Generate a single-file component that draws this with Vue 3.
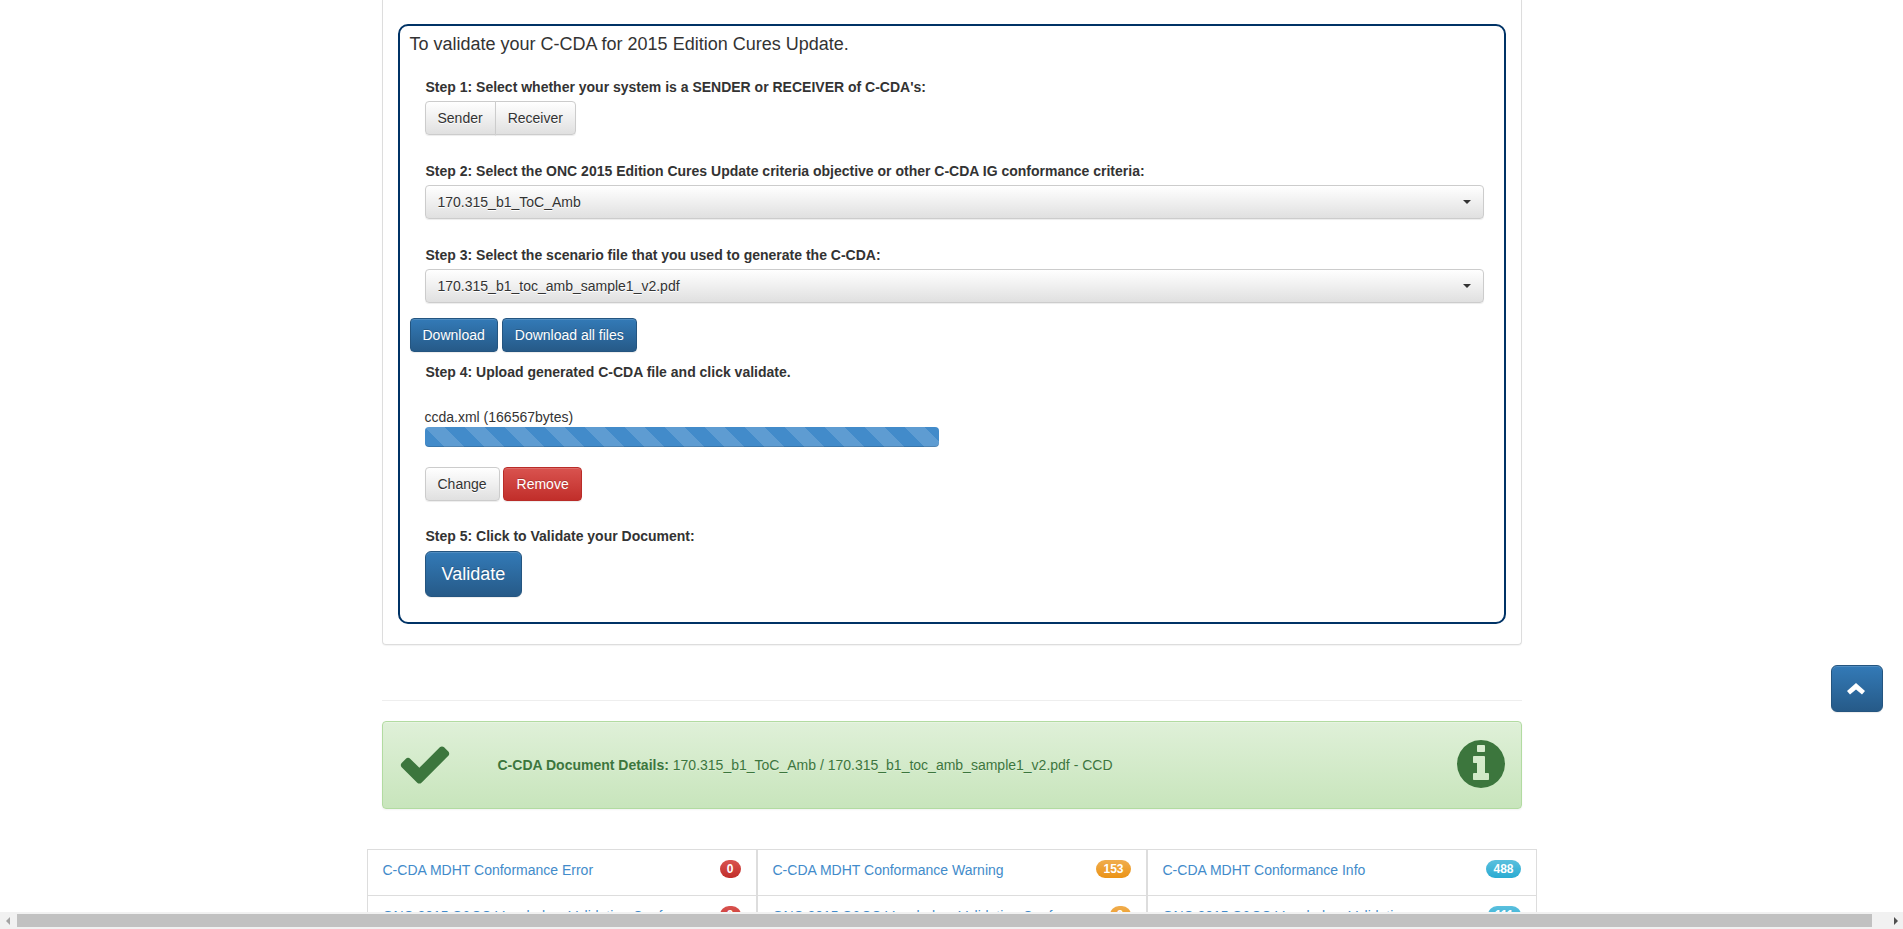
<script setup>
const steps = {
  one: "Step 1: Select whether your system is a SENDER or RECEIVER of C-CDA's:",
  two: 'Step 2: Select the ONC 2015 Edition Cures Update criteria objective or other C-CDA IG conformance criteria:',
  three: 'Step 3: Select the scenario file that you used to generate the C-CDA:',
  four: 'Step 4: Upload generated C-CDA file and click validate.',
  five: 'Step 5: Click to Validate your Document:'
}
const results = [
  { label: 'C-CDA MDHT Conformance Error', count: '0', kind: 'red' },
  { label: 'C-CDA MDHT Conformance Warning', count: '153', kind: 'orange' },
  { label: 'C-CDA MDHT Conformance Info', count: '488', kind: 'blue' },
  { label: 'ONC 2015 S&CC Vocabulary Validation Conformance Error', count: '0', kind: 'red' },
  { label: 'ONC 2015 S&CC Vocabulary Validation Conformance Warning', count: '0', kind: 'orange' },
  { label: 'ONC 2015 S&CC Vocabulary Validation Conformance Info', count: '111', kind: 'blue' }
]
</script>

<template>
  <div class="window">
    <div class="viewport">
      <main class="container">
        <section class="panel">
          <div class="box">
            <h4 class="title">To validate your C-CDA for 2015 Edition Cures Update.</h4>

            <div class="field">
              <label class="step">{{ steps.one }}</label>
              <div class="btn-group">
                <button class="btn btn-default">Sender</button>
                <button class="btn btn-default">Receiver</button>
              </div>
            </div>

            <div class="field">
              <label class="step">{{ steps.two }}</label>
              <button class="btn btn-default select">
                <span>170.315_b1_ToC_Amb</span><i class="caret"></i>
              </button>
            </div>

            <div class="field">
              <label class="step">{{ steps.three }}</label>
              <button class="btn btn-default select">
                <span>170.315_b1_toc_amb_sample1_v2.pdf</span><i class="caret"></i>
              </button>
            </div>

            <div class="downloads">
              <button class="btn btn-primary">Download</button>
              <button class="btn btn-primary">Download all files</button>
            </div>

            <div class="upload">
              <label class="step">{{ steps.four }}</label>
              <div class="filename">ccda.xml (166567bytes)</div>
              <div class="progress"></div>
              <div class="actions">
                <button class="btn btn-default">Change</button>
                <button class="btn btn-danger">Remove</button>
              </div>
            </div>

            <div class="validate-field">
              <label class="step">{{ steps.five }}</label>
              <button class="btn btn-primary btn-lg">Validate</button>
            </div>
          </div>
        </section>

        <hr class="rule" />

        <div class="alert">
          <svg class="alert-icon" viewBox="0 0 1792 1792" aria-hidden="true">
            <path d="M1671 566q0 40-28 68l-724 724-136 136q-28 28-68 28t-68-28l-136-136-362-362q-28-28-28-68t28-68l136-136q28-28 68-28t68 28l294 295 656-657q28-28 68-28t68 28l136 136q28 28 28 68z" />
          </svg>
          <p class="alert-text"><b>C-CDA Document Details:</b> 170.315_b1_ToC_Amb / 170.315_b1_toc_amb_sample1_v2.pdf - CCD</p>
          <svg class="alert-icon" viewBox="0 0 1792 1792" aria-hidden="true">
            <path d="M1152 1376v-160q0-14-9-23t-23-9h-96v-512q0-14-9-23t-23-9h-320q-14 0-23 9t-9 23v160q0 14 9 23t23 9h96v320h-96q-14 0-23 9t-9 23v160q0 14 9 23t23 9h448q14 0 23-9t9-23zm-128-896v-160q0-14-9-23t-23-9h-192q-14 0-23 9t-9 23v160q0 14 9 23t23 9h192q14 0 23-9t9-23zm640 416q0 209-103 385.5t-279.5 279.5-385.5 103-385.5-103-279.5-279.5-103-385.5 103-385.5 279.5-279.5 385.5-103 385.5 103 279.5 279.5 103 385.5z" />
          </svg>
        </div>

        <div class="results">
          <a v-for="r in results" :key="r.label" class="result" href="#">
            <span class="badge" :class="r.kind">{{ r.count }}</span>{{ r.label }}
          </a>
        </div>
      </main>

      <button class="btn btn-primary to-top" aria-label="Back to top">
        <svg viewBox="0 0 18 12" width="18" height="12" aria-hidden="true">
          <path d="M9 0 L18 8 L15 11.5 L9 6.4 L3 11.5 L0 8 Z" fill="#fff" />
        </svg>
      </button>
    </div>

    <div class="hscroll">
      <span class="arrow left"></span>
      <span class="thumb"></span>
      <span class="arrow right"></span>
    </div>
  </div>
</template>

<style scoped>
.window {
  display: flex;
  flex-direction: column;
  height: 929px;
  font-family: "Liberation Sans", Arial, sans-serif;
  font-size: 14px;
  line-height: 20px;
  color: #333;
  background: #fff;
}
.viewport {
  position: relative;
  flex: 1;
  min-height: 0;
  overflow: hidden;
}
.container {
  width: 1140px;
  margin: 0 auto;
}
.panel {
  padding: 24px 15px 20px;
  border: 1px solid #ddd;
  border-top: 0;
  border-radius: 0 0 4px 4px;
  box-shadow: 0 1px 1px rgba(0, 0, 0, 0.05);
}
.box {
  height: 600px;
  box-sizing: border-box;
  padding: 8px 10px 0;
  border: 2px solid #003366;
  border-radius: 10px;
}
.title {
  margin: 0 0 22px;
  font-size: 18px;
  font-weight: 400;
  line-height: 20px;
}
.field {
  display: flex;
  flex-direction: column;
  align-items: flex-start;
  gap: 4px;
  margin: 0 10px 25px 15px;
}
.step {
  display: block;
  padding: 1px 0 0 1px;
  font-weight: 700;
}
.btn {
  display: inline-block;
  box-sizing: border-box;
  height: 34px;
  padding: 6px 12px;
  border: 1px solid transparent;
  border-radius: 4px;
  font: inherit;
  white-space: nowrap;
  text-align: center;
  box-shadow: inset 0 1px 0 rgba(255, 255, 255, 0.15), 0 1px 1px rgba(0, 0, 0, 0.075);
}
.btn-default {
  color: #333;
  text-shadow: 0 1px 0 #fff;
  border-color: #ccc;
  background: linear-gradient(to bottom, #fff 0%, #e0e0e0 100%);
}
.btn-primary {
  color: #fff;
  text-shadow: 0 -1px 0 rgba(0, 0, 0, 0.2);
  border-color: #245580;
  background: linear-gradient(to bottom, #337ab7 0%, #265a88 100%);
}
.btn-danger {
  padding-left: 13px;
  color: #fff;
  text-shadow: 0 -1px 0 rgba(0, 0, 0, 0.2);
  border-color: #b92c28;
  background: linear-gradient(to bottom, #d9534f 0%, #c12e2a 100%);
}
.btn-lg {
  height: 46px;
  padding: 10px 16px;
  border-radius: 6px;
  font-size: 18px;
  line-height: 24px;
}
.btn-group {
  display: flex;
}
.btn-group .btn:first-child {
  border-radius: 4px 0 0 4px;
}
.btn-group .btn:last-child {
  margin-left: -1px;
  border-radius: 0 4px 4px 0;
}
.select {
  display: flex;
  align-items: center;
  justify-content: space-between;
  width: 100%;
  text-align: left;
}
.select .caret {
  width: 0;
  height: 0;
  margin-right: 0;
  border-top: 4px solid #333;
  border-left: 4px solid transparent;
  border-right: 4px solid transparent;
}
.downloads {
  display: flex;
  gap: 4px;
  margin-top: -10px;
}
.upload {
  margin: 9px 0 0 15px;
}
.filename {
  margin-top: 25px;
}
.progress {
  width: 514px;
  height: 20px;
  border-radius: 4px;
  background-color: #428bca;
  background-image: linear-gradient(
    45deg,
    rgba(255, 255, 255, 0.15) 25%,
    transparent 25%,
    transparent 50%,
    rgba(255, 255, 255, 0.15) 50%,
    rgba(255, 255, 255, 0.15) 75%,
    transparent 75%,
    transparent
  );
  background-size: 40px 40px;
  box-shadow: inset 0 -1px 0 rgba(0, 0, 0, 0.15);
}
.actions {
  display: flex;
  gap: 3px;
  margin-top: 20px;
}
.validate-field {
  display: flex;
  flex-direction: column;
  align-items: flex-start;
  gap: 5px;
  margin: 24px 0 0 15px;
}
.rule {
  height: 1px;
  margin: 55px 0 20px;
  border: 0;
  background: #eee;
}
.alert {
  display: flex;
  align-items: center;
  box-sizing: border-box;
  height: 88px;
  padding: 0 12px 0 14px;
  border: 1px solid #b2dba1;
  border-radius: 4px;
  color: #3c763d;
  text-shadow: 0 1px 0 rgba(255, 255, 255, 0.2);
  background: linear-gradient(to bottom, #dff0d8 0%, #c8e5bc 100%);
  box-shadow: inset 0 1px 0 rgba(255, 255, 255, 0.25), 0 1px 2px rgba(0, 0, 0, 0.05);
}
.alert-icon {
  flex: none;
  width: 56px;
  height: 56px;
  margin-top: -2px;
  fill: #3c763d;
}
.alert-text {
  flex: 1;
  margin: 0 0 0 45px;
}
.results {
  display: grid;
  grid-template-columns: repeat(3, 390px);
  margin: 40px -15px 0;
}
.result {
  display: block;
  box-sizing: border-box;
  min-height: 47px;
  margin-bottom: -1px;
  padding: 10px 15px;
  border: 1px solid #ddd;
  color: #428bca;
  text-decoration: none;
  background: #fff;
}
.badge {
  float: right;
  box-sizing: border-box;
  min-width: 10px;
  padding: 3px 7px;
  border-radius: 10px;
  font-size: 12px;
  font-weight: 700;
  line-height: 12px;
  color: #fff;
  text-align: center;
}
.badge.red {
  background: linear-gradient(to bottom, #d9534f, #c12e2a);
}
.badge.orange {
  background: linear-gradient(to bottom, #f0ad4e, #eb9316);
}
.badge.blue {
  background: linear-gradient(to bottom, #5bc0de, #2aabd2);
}
.to-top {
  position: absolute;
  top: 665px;
  right: 20px;
  width: 52px;
  height: 47px;
  padding: 0;
  border-radius: 6px;
}
.to-top svg {
  display: block;
  margin: 0 auto;
  transform: translateX(-1px);
}
.hscroll {
  display: flex;
  align-items: center;
  flex: none;
  height: 17px;
  background: #f1f1f1;
}
.arrow {
  flex: none;
  width: 0;
  height: 0;
  border-top: 4px solid transparent;
  border-bottom: 4px solid transparent;
}
.arrow.left {
  margin: 0 7px 0 6px;
  border-right: 4px solid #a3a3a3;
}
.arrow.right {
  margin: 0 5px 0 8px;
  border-left: 4px solid #505050;
}
.thumb {
  flex: none;
  width: 1855px;
  height: 13px;
  margin-right: 14px;
  background: #c1c1c1;
}
</style>

<style>
html,
body {
  margin: 0;
  overflow: hidden;
}
</style>
